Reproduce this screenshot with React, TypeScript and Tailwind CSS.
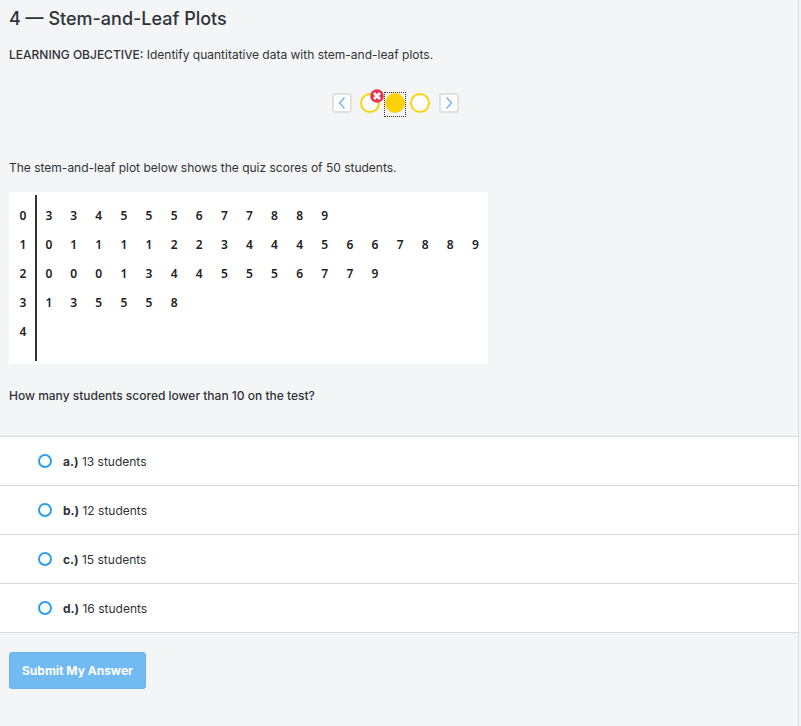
import { useState } from "react";
import clsx from "clsx";

const plot = [
  { stem: 0, leaves: [3, 3, 4, 5, 5, 5, 6, 7, 7, 8, 8, 9] },
  { stem: 1, leaves: [0, 1, 1, 1, 1, 2, 2, 3, 4, 4, 4, 5, 6, 6, 7, 8, 8, 9] },
  { stem: 2, leaves: [0, 0, 0, 1, 3, 4, 4, 5, 5, 5, 6, 7, 7, 9] },
  { stem: 3, leaves: [1, 3, 5, 5, 5, 8] },
  { stem: 4, leaves: [] },
];

const LEAF_COLUMNS = 18;

const answers = [
  { id: "a", text: "13 students" },
  { id: "b", text: "12 students" },
  { id: "c", text: "15 students" },
  { id: "d", text: "16 students" },
];

const steps = [
  { id: 1, wrong: true },
  { id: 2, wrong: false },
  { id: 3, wrong: false },
];

const ArrowButton = ({ label, path }: { label: string; path: string }) => (
  <button
    type="button"
    aria-label={label}
    className="mt-px flex size-5 items-center justify-center rounded-[3px] border-2 border-[#dfe1e3] bg-white"
  >
    <svg width="16" height="16" viewBox="0 0 16 16" fill="none" className="shrink-0">
      <path d={path} stroke="#6fb0f5" strokeWidth="1.3" />
    </svg>
  </button>
);

const Pager = () => {
  const [current, setCurrent] = useState(2);

  return (
    <nav aria-label="Questions" className="flex items-start justify-center">
      <ArrowButton label="Previous question" path="M10.5 2.5 5.5 8l5 5.5" />
      <div className="mr-2 ml-[7px] flex gap-[3px]">
        {steps.map((step) => (
          <button
            key={step.id}
            type="button"
            aria-label={`Question ${step.id}`}
            onClick={() => setCurrent(step.id)}
            className={clsx(
              "relative h-[25px] w-[22px] border border-dotted",
              step.id === current ? "border-[#333333]" : "border-transparent"
            )}
          >
            <span
              className={clsx(
                "absolute top-0 left-0 size-5 rounded-full border-2 border-[#fdd20b]",
                step.id === current ? "bg-[#fdd20b]" : "bg-white"
              )}
            />
            {step.wrong && (
              <svg
                width="14"
                height="14"
                viewBox="0 0 14 14"
                className="absolute -top-1 left-[10px]"
              >
                <circle cx="7" cy="7" r="6.8" fill="#e8334f" />
                <path d="m4 4 6 6m0-6-6 6" stroke="#fff" strokeWidth="2.6" />
              </svg>
            )}
          </button>
        ))}
      </div>
      <ArrowButton label="Next question" path="m5.5 2.5 5 5.5-5 5.5" />
    </nav>
  );
};

const StemAndLeafPlot = () => (
  <div className="max-w-[479px] bg-white py-[3px]">
    <table className="w-full table-fixed border-collapse text-center font-['Noto_Sans',sans-serif] text-xs font-semibold text-[#222222]">
      <colgroup>
        <col className="w-[27px]" />
        <col span={LEAF_COLUMNS} />
      </colgroup>
      <tbody>
        {plot.map((row, i) => {
          const edge = clsx(i === 0 && "pt-1.5", i === plot.length - 1 && "pb-[15px]");
          return (
            <tr key={row.stem}>
              <th
                scope="row"
                className={clsx("border-r-2 border-[#333333] pl-0.5 font-semibold", edge)}
              >
                <span className="block leading-[29px]">{row.stem}</span>
              </th>
              {Array.from({ length: LEAF_COLUMNS }, (_, n) => (
                <td key={n} className={clsx("leading-[29px]", edge)}>
                  {row.leaves[n]}
                </td>
              ))}
            </tr>
          );
        })}
      </tbody>
    </table>
  </div>
);

export default function App() {
  const [selected, setSelected] = useState("");

  return (
    <div className="min-h-screen bg-[#f4f5f7] pr-0.5 font-['Inter',sans-serif] text-xs leading-5 text-[#2f3337]">
      <form
        onSubmit={(e) => e.preventDefault()}
        className="min-h-screen border-r border-[#d9dbde]"
      >
        <div className="pr-4 pb-[30px] pl-[9px]">
          <h1 className="pt-[5px] text-lg leading-7 font-medium">4 — Stem-and-Leaf Plots</h1>
          <p className="mt-3 mb-[27px]">
            <span className="font-medium">LEARNING OBJECTIVE:</span> Identify quantitative data with
            stem-and-leaf plots.
          </p>
          <Pager />
          <p className="mt-[41px] mb-3.5">
            The stem-and-leaf plot below shows the quiz scores of 50 students.
          </p>
          <StemAndLeafPlot />
          <p className="mt-[22px] font-medium">
            How many students scored lower than 10 on the test?
          </p>
        </div>

        <fieldset aria-label="Answers" className="border-t border-[#d9dbde] bg-white">
          {answers.map((answer) => (
            <label
              key={answer.id}
              className="flex h-[49px] items-center border-b border-[#d9dbde] pl-[38px]"
            >
              <input
                type="radio"
                name="answer"
                value={answer.id}
                checked={selected === answer.id}
                onChange={() => setSelected(answer.id)}
                className="size-3.5 appearance-none rounded-full border-2 border-[#2d9fea] bg-white checked:bg-[#2d9fea]"
              />
              <span className="ml-[11px] pt-0.5">
                <b className="font-bold">{answer.id}.)</b> {answer.text}
              </span>
            </label>
          ))}
        </fieldset>

        <div className="px-[9px] pt-[19px]">
          <button
            type="submit"
            className="h-[37px] rounded-[3px] border border-[#67b4ee] bg-[#71bbf2] px-3 font-bold text-white"
          >
            Submit My Answer
          </button>
        </div>
      </form>
    </div>
  );
}
